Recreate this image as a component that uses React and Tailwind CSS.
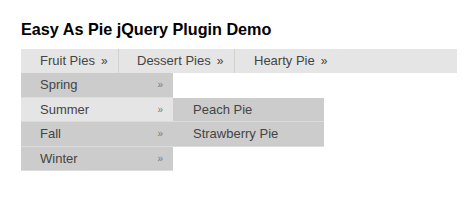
export default function App() {
  const font = { fontFamily: '"Liberation Sans", Arial, sans-serif' };
  return (
    <div className="w-[474px] h-[215px] bg-white relative" style={font}>
      <div className="pt-[19px] pl-[21px]">
        <h1 className="text-[16.2px] font-bold text-black leading-[20px] m-0">Easy As Pie jQuery Plugin Demo</h1>
      </div>
      <div className="ml-[21px] mt-[10px] w-[436px] h-[24px] bg-[#e5e5e5] flex text-[13px] text-[#444]">
        <div className="w-[98px] border-r border-[#d2d2d2] flex items-center pl-[19px] relative">
          Fruit Pies <span className="ml-[6px] text-[12px]">»</span>
          <div className="absolute left-0 top-[24px] w-[152px] flex flex-col">
            {["Spring", "Summer", "Fall", "Winter"].map((s) => (
              <div key={s} className={"h-[24.5px] border-b border-[#dcdcdc] flex items-center justify-between pl-[19px] pr-[10px] relative " + (s === "Summer" ? "bg-[#e5e5e5]" : "bg-[#cccccc]")}>
                <span>{s}</span>
                <span className="text-[10px] text-[#777]">»</span>
                {s === "Summer" && (
                  <div className="absolute left-[152px] top-0 w-[151px] flex flex-col">
                    {["Peach Pie", "Strawberry Pie"].map((p) => (
                      <div key={p} className="h-[24.5px] border-b border-[#dcdcdc] bg-[#cccccc] flex items-center pl-[20px]">{p}</div>
                    ))}
                  </div>
                )}
              </div>
            ))}
          </div>
        </div>
        <div className="w-[116px] border-r border-[#d2d2d2] flex items-center pl-[18px]">
          Dessert Pies <span className="ml-[6px] text-[12px]">»</span>
        </div>
        <div className="flex items-center pl-[19px]">
          Hearty Pie <span className="ml-[6px] text-[12px]">»</span>
        </div>
      </div>
    </div>
  );
}
